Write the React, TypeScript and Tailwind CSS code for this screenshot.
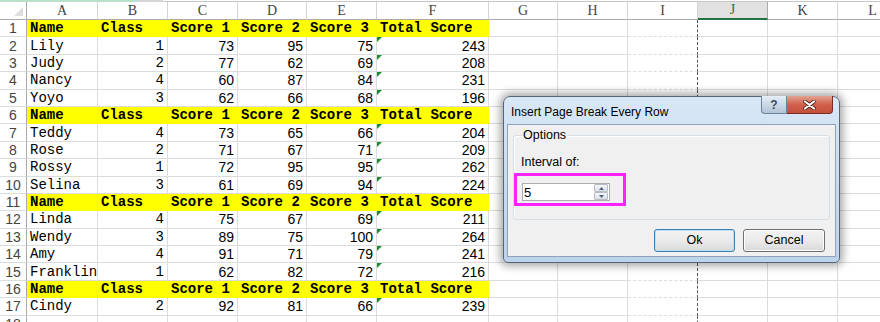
import React from "react";

const W = [
  "w-[27px]",
  "w-[71px]",
  "w-[70px]",
  "w-[70px]",
  "w-[69px]",
  "w-[70px]",
  "w-[112px]",
  "w-[69px]",
  "w-[70px]",
  "w-[70px]",
  "w-[70px]",
  "w-[70px]",
  "w-[70px]",
];

const LETTERS = ["A", "B", "C", "D", "E", "F", "G", "H", "I", "J", "K", "L"];

type Row = "H" | (string | number)[] | null;

const HEAD = ["Name", "Class", "Score 1", "Score 2", "Score 3", "Total Score"];

const ROWS: Row[] = [
  "H",
  ["Lily", 1, 73, 95, 75, 243],
  ["Judy", 2, 77, 62, 69, 208],
  ["Nancy", 4, 60, 87, 84, 231],
  ["Yoyo", 3, 62, 66, 68, 196],
  "H",
  ["Teddy", 4, 73, 65, 66, 204],
  ["Rose", 2, 71, 67, 71, 209],
  ["Rossy", 1, 72, 95, 95, 262],
  ["Selina", 3, 61, 69, 94, 224],
  "H",
  ["Linda", 4, 75, 67, 69, 211],
  ["Wendy", 3, 89, 75, 100, 264],
  ["Amy", 4, 91, 71, 79, 241],
  ["Franklin", 1, 62, 82, 72, 216],
  "H",
  ["Cindy", 2, 92, 81, 66, 239],
  null,
];

const mono = "font-['Liberation_Mono',monospace]";
const sans = "font-['Liberation_Sans',Arial,sans-serif]";
const serif = "font-['Liberation_Serif','Times_New_Roman',serif]";

function ColumnHeader() {
  return (
    <div className="flex h-[18px] shrink-0">
      <div
        className={`${W[0]} shrink-0 h-full border-r border-b border-[#ababab] bg-white relative`}
      >
        <svg
          className="absolute right-[3px] bottom-[3px]"
          width="9"
          height="9"
          viewBox="0 0 9 9"
        >
          <polygon points="9,0 9,9 0,9" fill="#dfdfdf" />
        </svg>
      </div>
      {LETTERS.map((l, i) => {
        const sel = l === "J";
        return (
          <div
            key={l}
            className={`${W[i + 1]} shrink-0 h-full flex items-center justify-center ${serif} text-[14px] leading-none ${
              sel
                ? "bg-[#e1e1e1] text-[#217346] border-b-2 border-b-[#217346] border-r border-r-[#ababab]"
                : "bg-white text-[#444] border-r border-b border-[#d4d4d4] border-b-[#ababab]"
            }`}
          >
            {l}
          </div>
        );
      })}
    </div>
  );
}

function Cell({
  idx,
  children,
  yellow,
  align,
  font,
  bold,
  tri,
}: {
  idx: number;
  children?: React.ReactNode;
  yellow?: boolean;
  align?: "l" | "r";
  font?: "m" | "s";
  bold?: boolean;
  tri?: boolean;
}) {
  const pageBreak = idx === 9;
  const border = yellow
    ? "border-r border-b border-[#ffff00] bg-[#ffff00]"
    : pageBreak
    ? "border-b border-b-[#dadcdd] border-r border-r-[#555555] border-dashed"
    : "border-r border-b border-[#dadcdd]";
  return (
    <div
      className={`${W[idx]} shrink-0 h-full relative flex items-center overflow-visible whitespace-nowrap ${border} ${
        align === "r" ? "justify-end pr-[3px]" : "justify-start pl-[3px]"
      } ${font === "s" ? `${sans} text-[14px]` : `${mono} text-[14px]`} ${
        bold ? "font-bold" : ""
      } text-black leading-none`}
    >
      {tri && (
        <span className="absolute top-0 left-0 w-0 h-0 border-t-[5px] border-t-[#1c8a2e] border-r-[5px] border-r-transparent" />
      )}
      {children}
    </div>
  );
}

function SheetRow({ n, row }: { n: number; row: Row }) {
  const empty = Array.from({ length: 6 }, (_, k) => k + 7);
  return (
    <div className="flex h-[17.4px] shrink-0">
      <div
        className={`${W[0]} shrink-0 h-full flex items-center justify-center border-r border-r-[#ababab] border-b border-b-[#dadcdd] bg-white ${sans} text-[14px] leading-none text-[#444]`}
      >
        {n}
      </div>
      {row === "H" &&
        HEAD.map((h, i) => (
          <Cell key={i} idx={i + 1} yellow bold>
            {h}
          </Cell>
        ))}
      {Array.isArray(row) &&
        row.map((v, i) => (
          <Cell
            key={i}
            idx={i + 1}
            align={i === 0 ? "l" : "r"}
            font={i >= 2 ? "s" : "m"}
            tri={i === 5}
          >
            {v}
          </Cell>
        ))}
      {row === null &&
        [1, 2, 3, 4, 5, 6].map((k) => <Cell key={k} idx={k} />)}
      {empty.map((k) => (
        <Cell key={k} idx={k} />
      ))}
    </div>
  );
}

function SpinBox() {
  return (
    <div className="w-[88px] h-[18px] border border-[#abadb3] bg-white flex items-center justify-between ml-[5px] mt-[7px]">
      <span className={`${sans} text-[13px] leading-none pl-[1px] text-black`}>5</span>
      <div className="flex flex-col w-[14px] h-[16px] mr-[1px] gap-0">
        <div className="h-[8px] border border-[#b7bcc4] bg-gradient-to-b from-[#f5f6f8] to-[#dde2e8] flex items-center justify-center rounded-[1px]">
          <svg width="5" height="3" viewBox="0 0 5 3">
            <polygon points="2.5,0 5,3 0,3" fill="#4d6185" />
          </svg>
        </div>
        <div className="h-[8px] border border-[#b7bcc4] bg-gradient-to-b from-[#f5f6f8] to-[#dde2e8] flex items-center justify-center rounded-[1px]">
          <svg width="5" height="3" viewBox="0 0 5 3">
            <polygon points="0,0 5,0 2.5,3" fill="#4d6185" />
          </svg>
        </div>
      </div>
    </div>
  );
}

function Dialog() {
  return (
    <div className="absolute left-[503px] top-[96px] w-[337px] h-[167px] rounded-t-[7px] rounded-b-[5px] border border-[#54657a] bg-gradient-to-b from-[#d9e7f6] via-[#c9dcf0] to-[#bcd3ec] shadow-[0_0_9px_3px_rgba(0,0,0,0.35)] flex flex-col px-[3px] pb-[5px]">
      <div className="h-[27px] flex justify-between items-start shrink-0">
        <div
          className={`${sans} text-[12px] leading-none text-black pl-[4px] pt-[9px]`}
        >
          Insert Page Break Every Row
        </div>
        <div className="flex mr-[3px] -mt-px">
          <div className="w-[26px] h-[18px] rounded-bl-[4px] border border-t-0 border-[#6f8398] bg-gradient-to-b from-[#e6eef7] via-[#ccd9e8] to-[#b2c4d8] flex items-center justify-center">
            <span className={`${sans} text-[12px] font-bold leading-none text-[#3d4a5a]`}>
              ?
            </span>
          </div>
          <div className="w-[46px] h-[18px] rounded-br-[4px] border border-t-0 border-l-0 border-[#7a2a20] bg-gradient-to-b from-[#e3a292] via-[#d0614c] to-[#c4503a] flex items-center justify-center">
            <svg width="13" height="10" viewBox="0 0 13 10">
              <path
                d="M2 1.5 L11 8.5 M11 1.5 L2 8.5"
                stroke="#4a1b14"
                strokeWidth="3.6"
                strokeLinecap="round"
              />
              <path
                d="M2 1.5 L11 8.5 M11 1.5 L2 8.5"
                stroke="#ffffff"
                strokeWidth="2.2"
                strokeLinecap="round"
              />
            </svg>
          </div>
        </div>
      </div>
      <div className="flex-1 bg-[#f0f0f0] border border-[#8fa4bb] flex flex-col px-[5px] pt-[4px]">
        <fieldset className="h-[91px] border border-[#d5dfe5] rounded-[3px] shadow-[inset_1px_1px_0_#fff] px-0 pb-0">
          <legend
            className={`${sans} text-[12.5px] leading-none text-black ml-[8px] px-[1px]`}
          >
            Options
          </legend>
          <div
            className={`${sans} text-[12.5px] leading-none text-black ml-[7px] mt-[14px]`}
          >
            Interval of:
          </div>
          <div className="ml-[0px] mt-[5px] w-[112px] h-[33px] border-[3px] border-[#ff22ff] flex items-start">
            <SpinBox />
          </div>
        </fieldset>
        <div className="flex justify-end gap-[8px] mt-[9px] pr-[5px]">
          <div
            className={`w-[81px] h-[23px] rounded-[3px] border border-[#3c7fb1] shadow-[inset_0_0_0_1px_#b8e0f8] bg-gradient-to-b from-[#f2f2f2] via-[#ebebeb] to-[#d9d9d9] flex items-center justify-center ${sans} text-[12.5px] text-black leading-none`}
          >
            Ok
          </div>
          <div
            className={`w-[82px] h-[23px] rounded-[3px] border border-[#707070] shadow-[inset_0_0_0_1px_#fcfcfc] bg-gradient-to-b from-[#f2f2f2] via-[#ebebeb] to-[#d9d9d9] flex items-center justify-center ${sans} text-[12.5px] text-black leading-none`}
          >
            Cancel
          </div>
        </div>
      </div>
    </div>
  );
}

export default function App() {
  return (
    <div className="w-[880px] h-[322px] overflow-hidden relative bg-white">
      <div className="flex h-[2px] w-[1000px] shrink-0">
        <div className="w-[138px] bg-[#b9e0c9]" />
        <div className="w-[25px] bg-[#d6d6d6]" />
        <div className="flex-1 bg-white border-b border-[#c6c6c6]" />
      </div>
      <div className="flex flex-col w-[1000px]">
        <ColumnHeader />
        {ROWS.map((r, i) => (
          <SheetRow key={i} n={i + 1} row={r} />
        ))}
      </div>
      <Dialog />
    </div>
  );
}
